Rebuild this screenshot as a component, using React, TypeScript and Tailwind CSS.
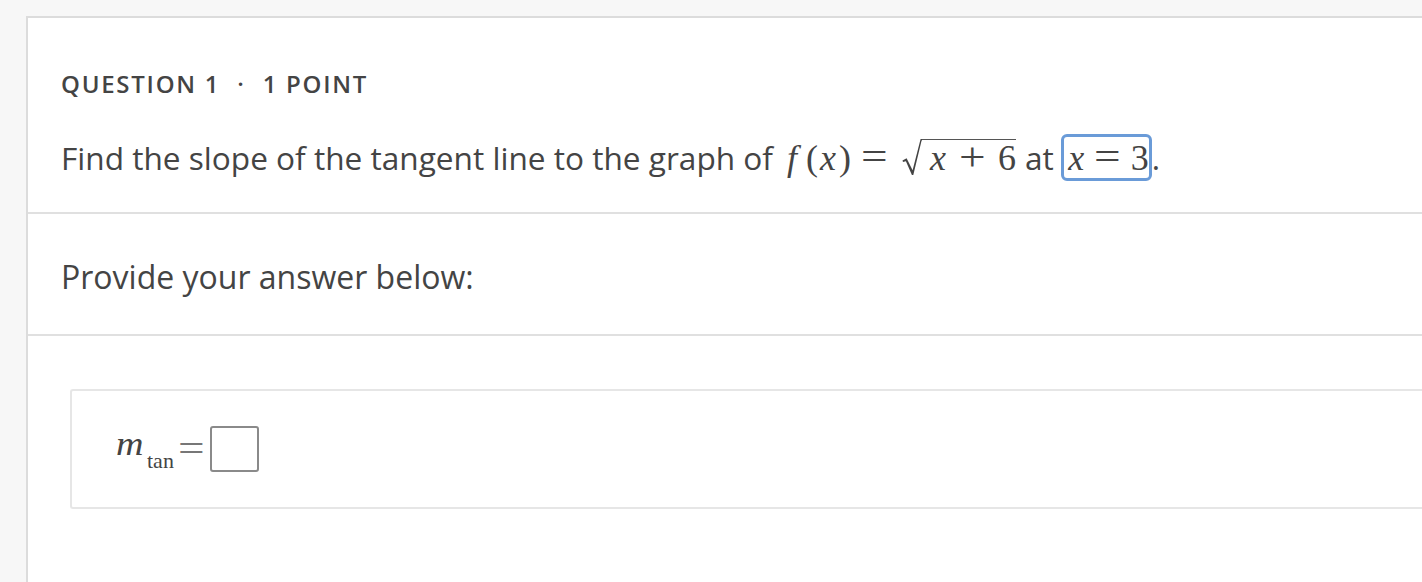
import React from 'react';

const sans = "font-['Open_Sans',sans-serif]";
const serif = "font-['Liberation_Serif',serif]";

// um glifo matemático numa caixa de largura fixa
const G = ({ w, children, it = false, cls = '' }: { w: string; children: React.ReactNode; it?: boolean; cls?: string }) => (
  <span className={`${w} inline-block text-center ${it ? 'italic' : ''} ${cls}`}>{children}</span>
);

// operador (= ou +) um pouco mais largo, como no MathJax
const Op = ({ w, children }: { w: string; children: React.ReactNode }) => (
  <span className={`${w} inline-block text-center text-[40px]`}>
    <span className="inline-block scale-x-[1.18]">{children}</span>
  </span>
);

const Radical = ({ children }: { children: React.ReactNode }) => (
  <span className="flex">
    <svg className="w-[20px] shrink-0" viewBox="0 0 20 35" preserveAspectRatio="none">
      <path d="M0.5 21 L4.6 18.6 L10.6 30.5 L18.6 0 L20 0 L20 1.5 L19.6 1.5 L11.3 35 L9.9 35 L3.9 21.6 L1 22.4 Z" fill="#444" />
    </svg>
    <span className="self-baseline border-t-[1.5px] border-[#555] flex items-baseline leading-[33px]">{children}</span>
  </span>
);

const Question = () => {
  return (
    <div className="min-h-screen w-full overflow-hidden bg-[#f7f7f7] pt-4 pl-[26px]">
      <div className={`${sans} min-h-[566px] bg-white border-l-2 border-t-2 border-[#dcdcdc] text-[#444]`}>
        {/* enunciado */}
        <section className="h-[196px] pl-[33px] pt-[49px] border-b-2 border-[#e0e0e0]">
          <h2 className="text-[24px] leading-[34px] font-semibold tracking-[1.75px] whitespace-nowrap">
            QUESTION 1 <span className="mx-[9px]">·</span> 1 POINT
          </h2>
          <p className="mt-[33px] text-[31.6px] leading-[46px] flex items-baseline whitespace-nowrap">
            <span>Find the slope of the tangent line to the graph of</span>
            <span className={`${serif} text-[36px] leading-[46px] ml-[5px] flex items-baseline`}>
              <G w="w-[28px]" it>f</G>
              <G w="w-[11px]">(</G>
              <G w="w-[22px]" it>x</G>
              <G w="w-[11px]">)</G>
              <span className="ml-[7px]"><Op w="w-[34px]">=</Op></span>
              <span className="ml-[11px]">
                <Radical>
                  <G w="w-[32px]" it>x</G>
                  <Op w="w-[36px]">+</Op>
                  <span className="w-[26px] inline-block text-right">6</span>
                </Radical>
              </span>
            </span>
            <span className="ml-[9px]">at</span>
            <span className={`${serif} text-[36px] leading-[40px] ml-[7px] flex items-baseline border-[3px] border-[#6a9bd8] rounded-[6px]`}>
              <G w="w-[25px]" it>x</G>
              <Op w="w-[36px]">=</Op>
              <span className="w-[24px] inline-block text-right">3</span>
            </span>
            <span>.</span>
          </p>
        </section>

        {/* instrução */}
        <section className="h-[122px] pl-[33px] pt-[40px] border-b-2 border-[#e0e0e0]">
          <p className="text-[32px] leading-[46px]">Provide your answer below:</p>
        </section>

        {/* resposta */}
        <section className="pl-[42px] pt-[53px] pb-[60px]">
          <div className="h-[120px] border-2 border-r-0 border-[#e6e6e6] rounded-l-[3px] flex items-center pl-[44px]">
            <div className={`${serif} flex items-center text-[#444]`}>
              <span className="w-[27px] text-[34px] leading-none italic mb-[10px]">
                <span className="inline-block origin-left scale-x-[1.12]">m</span>
              </span>
              <span className="text-[22px] leading-none mt-[24px] ml-[4px]">tan</span>
              <span className="text-[40px] ml-[6px] text-[#777] leading-none">
                <span className="inline-block scale-x-[1.18]">=</span>
              </span>
              <div className="ml-[8px] w-[49px] h-[46px] border-2 border-[#8a8a8a] rounded-[3px]" />
            </div>
          </div>
        </section>
      </div>
    </div>
  );
};

export default function App() {
  return <Question />;
}
